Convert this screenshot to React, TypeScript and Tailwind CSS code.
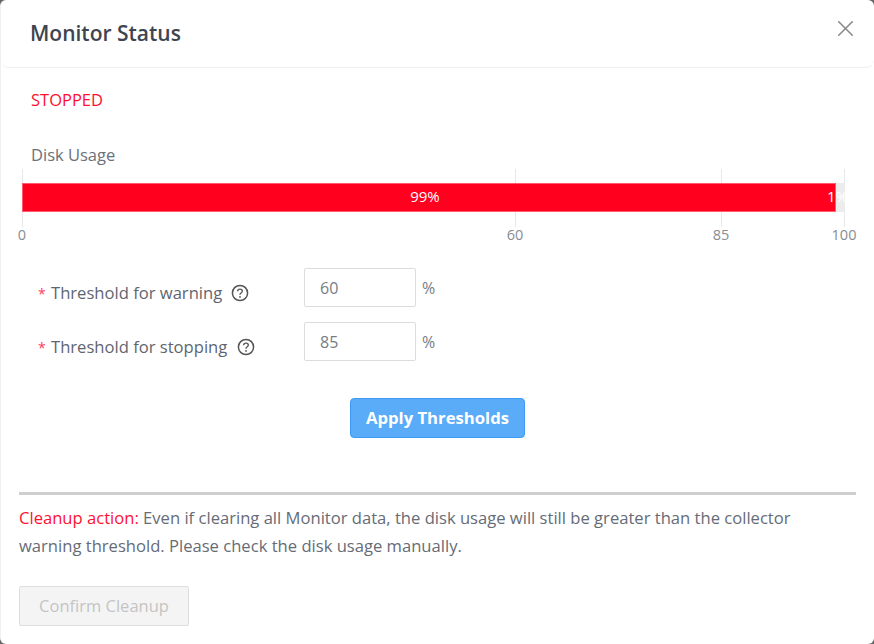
import { X } from "lucide-react";

const FONT = "font-['Open_Sans','Noto_Sans',sans-serif]";

function HelpIcon() {
  return (
    <svg width="18" height="18" viewBox="0 0 18 18" fill="none" className="text-[#555]">
      <circle cx="9" cy="9" r="7.6" stroke="currentColor" strokeWidth="1.5" />
      <path
        d="M6.7 7.2c0-1.3 1-2.1 2.3-2.1s2.3.8 2.3 2c0 1-.6 1.4-1.3 1.9-.6.4-1 .8-1 1.5v.3"
        stroke="currentColor"
        strokeWidth="1.4"
      />
      <circle cx="9" cy="12.9" r="0.9" fill="currentColor" />
    </svg>
  );
}

function ThresholdRow({ label, value, labelWidth }: { label: string; value: string; labelWidth: string }) {
  return (
    <div className="flex items-start h-[40px]">
      <div className="w-[286px] flex items-center h-[40px] pl-[20px] pt-[10px]">
        <span className="text-[#ff3b5c] text-[14px] w-[13px]">*</span>
        <span className={`text-[16.6px] text-[#5f6570] whitespace-nowrap ${labelWidth}`}>{label}</span>
        <HelpIcon />
      </div>
      <div className="w-[112px] h-[39px] border border-[#dcdcdc] rounded-[2px] pl-[15px] flex items-center text-[16px] text-[#777c85]">
        {value}
      </div>
      <span className="ml-[6px] h-[39px] flex items-center text-[16px] text-[#777c85]">%</span>
    </div>
  );
}

export default function App() {
  return (
    <div className={`${FONT} w-[874px] h-[644px] bg-[#666666] overflow-hidden`}>
      <div className="h-full bg-white rounded-[6px] border-l border-[#f0f0f0]">
        <header className="h-[68px] border-b border-[#efefef] rounded-b-[8px] flex items-start justify-between pl-[29px] pr-[15px]">
          <h1 className="mt-[19px] text-[21px] leading-[28px] font-semibold text-[#3f4550]">Monitor Status</h1>
          <X size={27} strokeWidth={1.4} className="mt-[15px] text-[#8a8a8a]" />
        </header>

        <div className="px-[17px]">
          <p className="pl-[13px] mt-[21px] text-[16.5px] leading-[22px] text-[#ff0f2f]">STOPPED</p>
          <p className="pl-[13px] mt-[33px] text-[16.5px] leading-[22px] text-[#6b717a]">Disk Usage</p>

          <div className="mt-[3px] ml-[4px] w-[823px] flex flex-col">
            <div className="relative h-[58px]">
              <div className="absolute left-0 top-0 h-full w-px bg-[#e8e8e8]" />
              <div className="absolute left-[493px] top-0 h-full w-px bg-[#e8e8e8]" />
              <div className="absolute left-[699px] top-0 h-full w-px bg-[#e8e8e8]" />
              <div className="absolute left-[822px] top-0 h-full w-px bg-[#e8e8e8]" />
              <div className="absolute left-0 right-0 top-[14px] h-[29px] flex bg-[#ececec] overflow-hidden">
                <div className="w-[814px] shrink-0 pr-[8px] pb-[2px] bg-[#ff001e] border border-[#ff5a6e] flex items-center justify-center text-white text-[15px]">
                  99%
                </div>
                <span className="-ml-[9px] pb-[2px] h-full flex items-center text-white text-[15px]">1%</span>
              </div>
            </div>
            <div className="relative h-[21px] text-[14.5px] leading-[16px] text-[#888c92]">
              <span className="absolute left-0 top-0 -translate-x-1/2">0</span>
              <span className="absolute left-[493px] top-0 -translate-x-1/2">60</span>
              <span className="absolute left-[699px] top-0 -translate-x-1/2">85</span>
              <span className="absolute left-[822px] top-0 -translate-x-1/2">100</span>
            </div>
          </div>

          <div className="mt-[20px] flex flex-col gap-[14px]">
            <ThresholdRow label="Threshold for warning" value="60" labelWidth="w-[180px]" />
            <ThresholdRow label="Threshold for stopping" value="85" labelWidth="w-[186px]" />
          </div>

          <div className="mt-[36px] pl-[332px]">
            <button className="w-[175px] h-[40px] rounded-[4px] bg-[#5aabf8] border border-[#3d9bf5] text-white text-[16.7px] font-bold">
              Apply Thresholds
            </button>
          </div>

          <div className="mt-[54px] ml-px w-[837px] h-[3px] bg-[#cfcfcf]" />

          <p className="ml-px mt-[9px] w-[830px] text-[16.6px] leading-[28px] text-[#666c76]">
            <span className="text-[#ff0f2f]">Cleanup action:</span> Even if clearing all Monitor data, the disk usage will still be greater than the collector warning threshold. Please check the disk usage manually.
          </p>

          <button className="mt-[26px] ml-px w-[170px] h-[40px] rounded-[2px] bg-[#f4f4f4] border border-[#dedede] text-[16.5px] text-[#c4c4c4]">
            Confirm Cleanup
          </button>
        </div>
      </div>
    </div>
  );
}
